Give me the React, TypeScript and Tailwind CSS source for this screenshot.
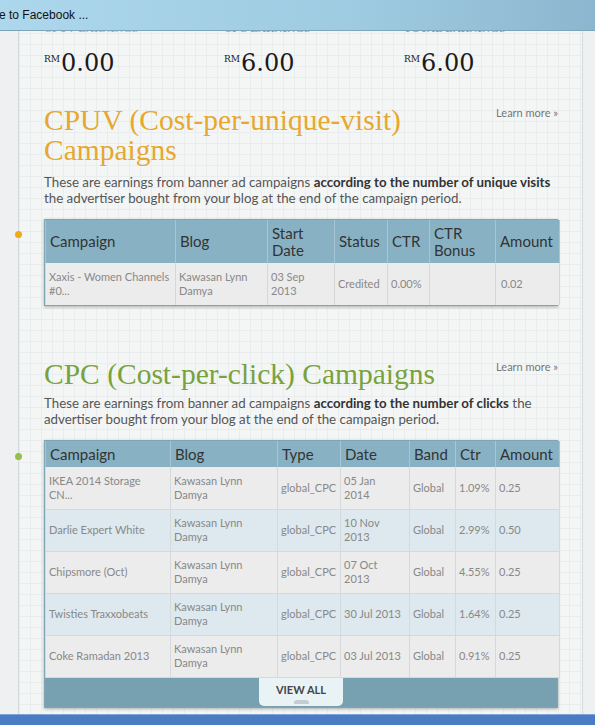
import React from 'react';

const serif = { fontFamily: '"Liberation Serif", "DejaVu Serif", serif' };
const numSerif = { fontFamily: '"DejaVu Serif", "Liberation Serif", serif' };

const cpuvHead = [
  { label: 'Campaign', w: 'w-[130px]' },
  { label: 'Blog', w: 'w-[92px]' },
  { label: 'Start Date', w: 'w-[67px]' },
  { label: 'Status', w: 'w-[53px]' },
  { label: 'CTR', w: 'w-[42px]' },
  { label: 'CTR Bonus', w: 'w-[66px]' },
  { label: 'Amount', w: 'w-[64px]' },
];

const cpcHead = [
  { label: 'Campaign', w: 'w-[125px]' },
  { label: 'Blog', w: 'w-[107px]' },
  { label: 'Type', w: 'w-[63px]' },
  { label: 'Date', w: 'w-[69px]' },
  { label: 'Band', w: 'w-[46px]' },
  { label: 'Ctr', w: 'w-[40px]' },
  { label: 'Amount', w: 'w-[64px]' },
];

// line breaks kept where the original cells wrap
const cpcRows = [
  ['IKEA 2014 Storage\nCN...', 'Kawasan Lynn\nDamya', 'global_CPC', '05 Jan\n2014', 'Global', '1.09%', '0.25'],
  ['Darlie Expert White', 'Kawasan Lynn\nDamya', 'global_CPC', '10 Nov\n2013', 'Global', '2.99%', '0.50'],
  ['Chipsmore (Oct)', 'Kawasan Lynn\nDamya', 'global_CPC', '07 Oct\n2013', 'Global', '4.55%', '0.25'],
  ['Twisties Traxxobeats', 'Kawasan Lynn\nDamya', 'global_CPC', '30 Jul 2013', 'Global', '1.64%', '0.25'],
  ['Coke Ramadan 2013', 'Kawasan Lynn\nDamya', 'global_CPC', '03 Jul 2013', 'Global', '0.91%', '0.25'],
];

const Stat = ({ label, color, value }: { label: string; color: string; value: string }) => (
  <div className="w-[180px] shrink-0">
    <div className={`text-[11px] uppercase tracking-wide font-bold leading-[12px] ${color}`} style={serif}>
      {label}
    </div>
    <div className="mt-[17px] flex items-start text-[#1a1a1a]" style={numSerif}>
      <span className="text-[9px] mt-[3px] mr-[1px] leading-[10px]">RM</span>
      <span className="text-[24px] leading-[24px]">{value}</span>
    </div>
  </div>
);

const SectionTitle = ({ children, color }: { children: React.ReactNode; color: string }) => (
  <div className="flex items-start justify-between">
    <h2 className={`text-[29.5px] leading-[30px] ${color} w-[420px]`} style={serif}>
      {children}
    </h2>
    <a className="text-[11px] text-[#777] mt-[0px]">Learn more »</a>
  </div>
);

export default function App() {
  return (
    <div
      className="relative w-[595px] h-[725px] overflow-hidden bg-[#eceff0] text-[#555]"
      style={{ fontFamily: 'Lato, "Open Sans", sans-serif' }}
    >
      {/* notification bar */}
      <div className="absolute top-0 left-0 right-0 h-[31px] z-10 bg-[linear-gradient(90deg,#acd7ec,#9fcbe2_60%,#8cb6cf)] border-b border-[#7ea4ba] flex items-center">
        <span className="text-[12px] text-[#111] -ml-[1px]" style={{ fontFamily: '"Liberation Sans", sans-serif' }}>
          e to Facebook ...
        </span>
      </div>

      <div className="flex h-[714px]">
        <div className="w-[18px] shrink-0 bg-[#eef0f2]" />
        <div className="w-[565px] shrink-0 border-x border-[#d4d9db] bg-[#f4f6f6] bg-[linear-gradient(#e9edee_1px,transparent_1px),linear-gradient(90deg,#e9edee_1px,transparent_1px)] bg-[size:11px_11px] pl-[25px] pr-[24px] pt-[22px]">
          {/* earnings summary */}
          <div className="flex">
            <Stat label="CPUV Earnings" color="text-[#e3a83a]" value="0.00" />
            <Stat label="CPC Earnings" color="text-[#9bab3c]" value="6.00" />
            <Stat label="Total Earnings" color="text-[#999]" value="6.00" />
          </div>

          {/* CPUV */}
          <div className="mt-[30px]">
            <SectionTitle color="text-[#e6a82e]">CPUV (Cost-per-unique-visit) Campaigns</SectionTitle>
            <p className="mt-[9px] text-[13.3px] leading-[16px] text-[#555]">
              These are earnings from banner ad campaigns{' '}
              <b className="text-[#333]">according to the number of unique visits</b> the advertiser bought from your
              blog at the end of the campaign period.
            </p>
            <div className="relative mt-[13px] shadow-[0_1px_3px_rgba(0,0,0,0.3)] border border-[#7fa4b4]">
              <span className="absolute left-[-30px] top-[11px] w-[7px] h-[7px] rounded-full bg-[#f0a81c]" />
              <table className="w-full table-fixed border-collapse">
                <thead>
                  <tr className="bg-[#88b2c4]">
                    {cpuvHead.map((h) => (
                      <th
                        key={h.label}
                        className={`${h.w} h-[43px] px-[4px] text-left font-normal text-[15px] leading-[17px] text-[#333] border-x border-[#a7c6d3]`}
                      >
                        {h.label}
                      </th>
                    ))}
                  </tr>
                </thead>
                <tbody>
                  <tr className="bg-[#ececec] text-[11px] leading-[14px] text-[#888]">
                    <td className="h-[42px] px-[3px] border-x border-[#d7d7d7]">Xaxis - Women Channels #0...</td>
                    <td className="px-[3px] border-x border-[#d7d7d7]">Kawasan Lynn Damya</td>
                    <td className="px-[3px] border-x border-[#d7d7d7]">03 Sep 2013</td>
                    <td className="px-[3px] border-x border-[#d7d7d7]">Credited</td>
                    <td className="px-[3px] border-x border-[#d7d7d7]">0.00%</td>
                    <td className="px-[3px] border-x border-[#d7d7d7]"></td>
                    <td className="px-[5px] border-x border-[#d7d7d7]">0.02</td>
                  </tr>
                </tbody>
              </table>
            </div>
          </div>

          {/* CPC */}
          <div className="mt-[53px]">
            <SectionTitle color="text-[#78a23c]">CPC (Cost-per-click) Campaigns</SectionTitle>
            <p className="mt-[6px] text-[13.3px] leading-[16px] text-[#555]">
              These are earnings from banner ad campaigns{' '}
              <b className="text-[#333]">according to the number of clicks</b> the advertiser bought from your blog at
              the end of the campaign period.
            </p>
            <div className="relative mt-[13px] shadow-[0_1px_3px_rgba(0,0,0,0.3)] border border-[#7fa4b4]">
              <span className="absolute left-[-30px] top-[12px] w-[7px] h-[7px] rounded-full bg-[#95bf4a]" />
              <table className="w-full table-fixed border-collapse">
                <thead>
                  <tr className="bg-[#88b2c4]">
                    {cpcHead.map((h) => (
                      <th
                        key={h.label}
                        className={`${h.w} h-[26px] px-[4px] text-left font-normal text-[15px] leading-[17px] text-[#333] border-x border-[#a7c6d3]`}
                      >
                        {h.label}
                      </th>
                    ))}
                  </tr>
                </thead>
                <tbody>
                  {cpcRows.map((r, i) => (
                    <tr
                      key={r[0]}
                      className={`${i % 2 ? 'bg-[#dde9ee]' : 'bg-[#ececec]'} text-[11px] leading-[14px] text-[#888] border-b border-[#d3d9dc]`}
                    >
                      {r.map((c, j) => (
                        <td key={j} className="h-[42px] px-[3px] whitespace-pre-line border-x border-[#d3d9dc]">
                          {c}
                        </td>
                      ))}
                    </tr>
                  ))}
                </tbody>
              </table>
              <div className="h-[29px] bg-[#77a0b1] flex justify-center">
                <div className="w-[84px] h-[28px] bg-[#e9f3f6] rounded-b-[5px] flex flex-col items-center pt-[6px]">
                  <span className="text-[11px] font-bold text-[#444] leading-[12px]">VIEW ALL</span>
                  <span className="mt-[4px] w-[15px] h-[4px] rounded-t-[3px] bg-[#c4ced2]" />
                </div>
              </div>
            </div>
          </div>
        </div>
        <div className="flex-1 bg-[#eef0f2]" />
      </div>
      <div className="h-[11px] bg-[#4a7bc3] border-t border-[#7ea4d8]" />
    </div>
  );
}
